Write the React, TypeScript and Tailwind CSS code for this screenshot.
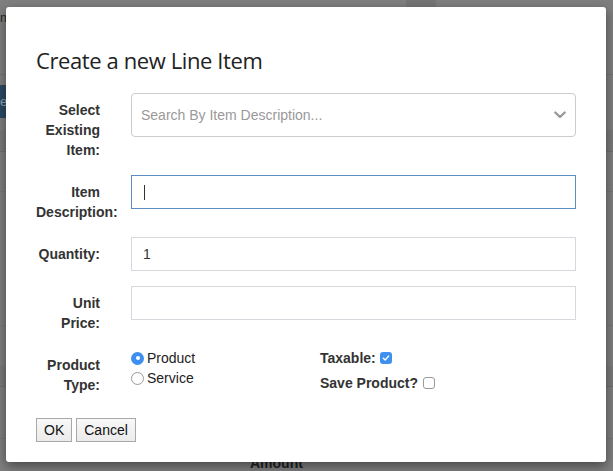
import React from 'react'

function Label({ children }: { children: React.ReactNode }) {
  return (
    <div className="w-[64px] shrink-0 pt-[7px] text-right text-[14px] font-bold leading-[20px] text-[#333]">
      {children}
    </div>
  )
}

function Radio({ checked, label }: { checked?: boolean; label: string }) {
  return (
    <div className="flex h-[20px] items-center">
      {checked ? (
        <span className="flex h-[13px] w-[13px] items-center justify-center rounded-full bg-[#3d8ff0]">
          <span className="h-[4px] w-[4px] rounded-full bg-white" />
        </span>
      ) : (
        <span className="h-[13px] w-[13px] rounded-full border border-[#9a9a9a] bg-white" />
      )}
      <span className="ml-[3px] text-[14px] text-[#222]">{label}</span>
    </div>
  )
}

function Checkbox({ checked }: { checked?: boolean }) {
  return checked ? (
    <span className="ml-[4px] flex h-[12px] w-[12px] items-center justify-center rounded-[3px] bg-[#3d8ff0]">
      <svg viewBox="0 0 12 12" className="h-[10px] w-[10px]">
        <path d="M2.8 6.3 L5 8.4 L9.2 3.6" fill="none" stroke="white" strokeWidth="1.6" strokeLinecap="round" strokeLinejoin="round" />
      </svg>
    </span>
  ) : (
    <span className="ml-[5px] h-[12px] w-[12px] rounded-[3px] border border-[#9a9a9a] bg-white" />
  )
}

export default function App() {
  return (
    <div className="relative h-[471px] w-[613px] overflow-hidden bg-[#7f7f7f] font-['Liberation_Sans',Arial,sans-serif]">
      {/* dimmed page behind the dialog */}
      <div className="flex flex-col">
        <div className="flex h-[7px]">
          <div className="w-[406px]" />
          <div className="w-[30px] bg-[#767676]" />
        </div>
        <div className="h-[68px] border-b border-[#747474] pt-[3px] text-[13px] leading-[16px] text-[#2a2a2a]">
          m
        </div>
        <div className="h-[10px]" />
        <div className="flex h-[33px]">
          <div className="flex w-[40px] items-center bg-[#2b4a63] text-[13px] text-[#8fa3b5]">
            <span>e</span>
          </div>
        </div>
        <div className="h-[12px]" />
        <div className="h-[22px] border-b border-[#707070] bg-[#7a7a7a]" />
        <div className="h-[40px] border-b border-[#777]" />
        <div className="h-[134px] border-b border-[#777]" />
        <div className="h-[40px]" />
        <div className="h-[21px] border-b border-[#707070] bg-[#7a7a7a]" />
        <div className="h-[52px] border-b border-[#777]" />
        <div className="pl-[250px] pt-[14px] text-[14px] font-bold text-[#222]">Amount</div>
      </div>

      {/* dialog */}
      <div className="absolute left-[6px] top-[7px] h-[455px] w-[600px] rounded-[3px] bg-white px-[30px] shadow-[0_4px_12px_rgba(0,0,0,0.45)]">
        <h2 className="pt-[38px] font-['Open_Sans',sans-serif] text-[22px] font-normal leading-[30px] tracking-[-0.4px] text-[#222]">
          Create a new Line Item
        </h2>

        <div className="mt-[18px] flex">
          <Label>
            Select Existing Item:
          </Label>
          <div className="ml-[31px] flex h-[44px] w-[445px] items-center justify-between rounded-[4px] border border-[#ccc] pl-[9px] pr-[9px] text-[14px] text-[#999]">
            <span>Search By Item Description...</span>
            <svg viewBox="0 0 12 8" className="h-[8px] w-[12px]">
              <path d="M1.3 1.5 L6 6 L10.7 1.5" fill="none" stroke="#999" strokeWidth="2.4" strokeLinecap="round" strokeLinejoin="round" />
            </svg>
          </div>
        </div>

        <div className="mt-[15px] flex">
          <Label>
            Item Description:
          </Label>
          <div className="ml-[31px] flex h-[34px] w-[445px] items-center border border-[#5b8fc0] pl-[12px]">
            <span className="h-[15px] w-px bg-[#333]" />
          </div>
        </div>

        <div className="mt-[15px] flex">
          <Label>Quantity:</Label>
          <div className="ml-[31px] flex h-[34px] w-[445px] items-center border border-[#d7d7de] pl-[11px] text-[14px] text-[#333]">
            1
          </div>
        </div>

        <div className="mt-[15px] flex">
          <Label>
            Unit Price:
          </Label>
          <div className="ml-[31px] h-[34px] w-[445px] border border-[#d7d7de]" />
        </div>

        <div className="mt-[15px] flex">
          <Label>
            Product Type:
          </Label>
          <div className="ml-[31px] flex">
            <div className="w-[189px]">
              <Radio checked label="Product" />
              <Radio label="Service" />
            </div>
            <div className="text-[14px] font-bold text-[#333]">
              <div className="flex h-[20px] items-center">
                Taxable:
                <Checkbox checked />
              </div>
              <div className="mt-[5px] flex h-[20px] items-center">
                Save Product?
                <Checkbox />
              </div>
            </div>
          </div>
        </div>

        <div className="mt-[23px] flex gap-[4px]">
          <button className="h-[24px] border border-[#a8a8a8] bg-gradient-to-b from-[#f8f8f8] to-[#ebebeb] px-[7px] text-[14px] text-[#111]">
            OK
          </button>
          <button className="h-[24px] border border-[#a8a8a8] bg-gradient-to-b from-[#f8f8f8] to-[#ebebeb] px-[7px] text-[14px] text-[#111]">
            Cancel
          </button>
        </div>
      </div>
    </div>
  )
}
